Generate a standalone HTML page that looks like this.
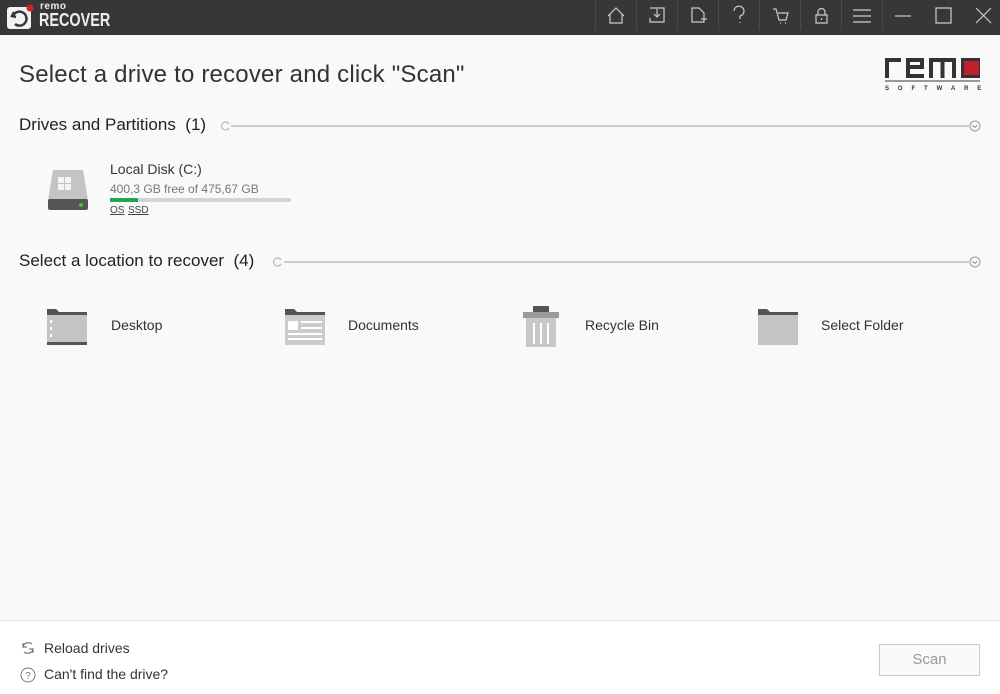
<!DOCTYPE html>
<html><head><meta charset="utf-8"><style>
*{margin:0;padding:0;box-sizing:border-box}
body{width:1000px;height:694px;background:#f9f9f9;font-family:"Liberation Sans",sans-serif;color:#333;position:relative;overflow:hidden}
.tb{position:absolute;left:0;top:0;width:1000px;height:35px;background:#373737}
.sep{position:absolute;top:0;width:1px;height:30px;background:#4a4a4a}
.ab{position:absolute}
h1{position:absolute;left:19px;top:61px;font-size:24px;font-weight:normal;color:#333;letter-spacing:0.2px}
.sec{position:absolute;left:19px;font-size:17px;color:#222}
.line{position:absolute;height:2px;background:#ccc}
.loc{position:absolute;top:317px;font-size:14px;color:#333}
</style></head><body>
<div class="tb">
 <svg class="ab" style="left:6px;top:4px" width="28" height="26" viewBox="0 0 28 26"><rect x="1" y="3" width="24" height="22" rx="3" fill="#f2f2f2"/><circle cx="24" cy="4" r="3.5" fill="#d02020"/><path d="M8 8 L6 12 L10 13 M7 12 A7 7 0 1 1 9 20" stroke="#373737" stroke-width="2.5" fill="none"/></svg>
 <div class="ab" style="left:40px;top:1px;color:#eee;font-size:10px;font-weight:bold;letter-spacing:0.5px">remo</div>
 <div class="ab" style="left:39px;top:10px;color:#eee;font-size:18px;font-weight:bold;transform:scaleX(0.8);transform-origin:left">RECOVER</div>
 <div class="sep" style="left:595px"></div><div class="sep" style="left:636px"></div><div class="sep" style="left:677px"></div><div class="sep" style="left:718px"></div><div class="sep" style="left:759px"></div><div class="sep" style="left:800px"></div><div class="sep" style="left:841px"></div><div class="sep" style="left:882px"></div>
 <svg class="ab" style="left:0;top:0" width="1000" height="35" stroke="#ccc" stroke-width="1.2" fill="none">
  <path d="M608 16 L616 8 L624 16 M610 14 V23 H622 V14"/>
  <path d="M650 8 H664 V22 H650 V18 M657 9 V17 M654 14 L657 17 L660 14"/>
  <path d="M692 8 H699 L704 13 V22 H692 Z M701 19 H707 M704 16 V22"/>
  <path d="M734 11 A5 5 0 1 1 740 16 V19 M740 22 V23"/>
  <path d="M773 9 L776 9 L779 20 H786 L788 13 H778 M780 23 h1 M785 23 h1"/>
  <path d="M816 15 H827 V23 H816 Z M818 15 V12 A3.5 3.5 0 0 1 825 12 V15 M821.5 18 V20"/>
  <path d="M853 10 H871 M853 16 H871 M853 22 H871"/>
  <path d="M895 16 H911"/>
  <path d="M936 8 H951 V23 H936 Z"/>
  <path d="M976 8 L991 23 M991 8 L976 23"/>
 </svg>
</div>
<h1>Select a drive to recover and click "Scan"</h1>
<svg class="ab" style="left:884px;top:56px" width="98" height="36" viewBox="0 0 98 36">
 <g fill="#333">
  <rect x="1" y="2" width="4" height="20"/><rect x="1" y="2" width="16" height="4"/>
  <path d="M22 2 H40 V13 H26 V18 H40 V22 H22 Z M26 6 V9 H36 V6 Z" fill-rule="evenodd"/>
  <path d="M45 2 H72 V22 H68 V6 H60.5 V22 H56.5 V6 H49 V22 H45 Z"/>
  <rect x="77" y="2" width="19" height="20"/>
 </g>
 <rect x="80" y="5" width="15" height="14" fill="#c0202a"/>
 <rect x="1" y="24" width="95" height="2" fill="#999"/>
 <text x="1" y="34" font-size="6" font-weight="bold" fill="#333" letter-spacing="8.9" font-family="Liberation Sans">SOFTWARE</text>
</svg>

<div class="sec" style="top:115px">Drives and Partitions&nbsp; (1)</div>
<svg class="ab" style="left:221px;top:121px" width="10" height="10"><path d="M8 3 A4 4 0 1 0 8 7" stroke="#bbb" stroke-width="1.3" fill="none"/></svg>
<div class="line" style="left:231px;top:125px;width:738px"></div>
<svg class="ab" style="left:969px;top:120px" width="12" height="12"><circle cx="6" cy="6" r="5" stroke="#999" fill="none"/><path d="M3.5 5 L6 7.5 L8.5 5" stroke="#999" fill="none"/></svg>

<svg class="ab" style="left:46px;top:168px" width="44" height="44"><path d="M7 2 H37 L42 32 H2 Z" fill="#c4c4c4"/><rect x="2" y="31" width="40" height="11" rx="2" fill="#555"/><rect x="12" y="9" width="6" height="6" fill="#f4f4f4"/><rect x="19" y="9" width="6" height="6" fill="#f4f4f4"/><rect x="12" y="16" width="6" height="6" fill="#f4f4f4"/><rect x="19" y="16" width="6" height="6" fill="#f4f4f4"/><circle cx="35" cy="37" r="2" fill="#2ecc40"/></svg>
<div class="ab" style="left:110px;top:161px;font-size:14px;color:#333">Local Disk (C:)</div>
<div class="ab" style="left:110px;top:182px;font-size:12px;color:#777">400,3 GB free of 475,67 GB</div>
<div class="ab" style="left:110px;top:198px;width:181px;height:4px;background:#d4d4d4"><div style="width:28px;height:4px;background:#20a84a"></div></div>
<div class="ab" style="left:110px;top:205px;font-size:10px;color:#444;text-decoration:underline">OS</div>
<div class="ab" style="left:128px;top:205px;font-size:10px;color:#444;text-decoration:underline">SSD</div>

<div class="sec" style="top:251px">Select a location to recover&nbsp; (4)</div>
<svg class="ab" style="left:273px;top:257px" width="10" height="10"><path d="M8 3 A4 4 0 1 0 8 7" stroke="#bbb" stroke-width="1.3" fill="none"/></svg>
<div class="line" style="left:284px;top:261px;width:685px"></div>
<svg class="ab" style="left:969px;top:256px" width="12" height="12"><circle cx="6" cy="6" r="5" stroke="#999" fill="none"/><path d="M3.5 5 L6 7.5 L8.5 5" stroke="#999" fill="none"/></svg>

<svg class="ab" style="left:46px;top:308px" width="42" height="38"><path d="M1 1 H10 L13 4 H41 V37 H1 Z" fill="#c4c4c4"/><path d="M1 1 H10 L13 4 H41 V7 H1 Z" fill="#555"/><rect x="1" y="34" width="40" height="3" fill="#555"/><rect x="4" y="12" width="2" height="3" fill="#fff"/><rect x="4" y="19" width="2" height="3" fill="#fff"/><rect x="4" y="26" width="2" height="3" fill="#fff"/></svg>
<div class="loc" style="left:111px">Desktop</div>
<svg class="ab" style="left:284px;top:308px" width="42" height="38"><path d="M1 1 H10 L13 4 H41 V37 H1 Z" fill="#ccc"/><path d="M1 1 H10 L13 4 H41 V7 H1 Z" fill="#555"/><rect x="4" y="13" width="10" height="9" fill="#fff"/><rect x="17" y="13" width="21" height="2" fill="#fff"/><rect x="17" y="19" width="21" height="2" fill="#fff"/><rect x="4" y="25" width="34" height="2" fill="#fff"/><rect x="4" y="30" width="34" height="2" fill="#fff"/></svg>
<div class="loc" style="left:348px">Documents</div>
<svg class="ab" style="left:521px;top:305px" width="40" height="43"><rect x="12" y="1" width="16" height="6" fill="#555"/><rect x="2" y="7" width="36" height="6" fill="#999"/><rect x="5" y="13" width="30" height="29" fill="#c8c8c8"/><rect x="12" y="18" width="2" height="21" fill="#fff"/><rect x="19" y="18" width="2" height="21" fill="#fff"/><rect x="26" y="18" width="2" height="21" fill="#fff"/></svg>
<div class="loc" style="left:585px">Recycle Bin</div>
<svg class="ab" style="left:757px;top:308px" width="42" height="38"><path d="M1 1 H10 L13 4 H41 V37 H1 Z" fill="#c4c4c4"/><path d="M1 1 H10 L13 4 H41 V7 H1 Z" fill="#555"/></svg>
<div class="loc" style="left:821px">Select Folder</div>

<div class="ab" style="left:0;top:620px;width:1000px;height:74px;background:#fff;border-top:1px solid #e4e4e4"></div>
<svg class="ab" style="left:20px;top:640px" width="16" height="16"><path d="M12 4 A6 6 0 0 0 3 6 M4 12 A6 6 0 0 0 13 10" stroke="#777" stroke-width="1.3" fill="none"/><path d="M3 3 V7 H7 M13 13 V9 H9" stroke="#777" stroke-width="1.2" fill="none"/></svg>
<div class="ab" style="left:44px;top:640px;font-size:14px;color:#333">Reload drives</div>
<svg class="ab" style="left:20px;top:667px" width="16" height="16"><circle cx="8" cy="8" r="7" stroke="#777" fill="none"/><text x="8" y="12" font-size="10" text-anchor="middle" fill="#777" font-family="Liberation Sans">?</text></svg>
<div class="ab" style="left:44px;top:666px;font-size:14px;color:#333">Can't find the drive?</div>
<div class="ab" style="left:879px;top:644px;width:101px;height:32px;border:1px solid #c8c8c8;background:#fafafa;color:#999;font-size:15px;text-align:center;line-height:30px">Scan</div>
</body></html>
